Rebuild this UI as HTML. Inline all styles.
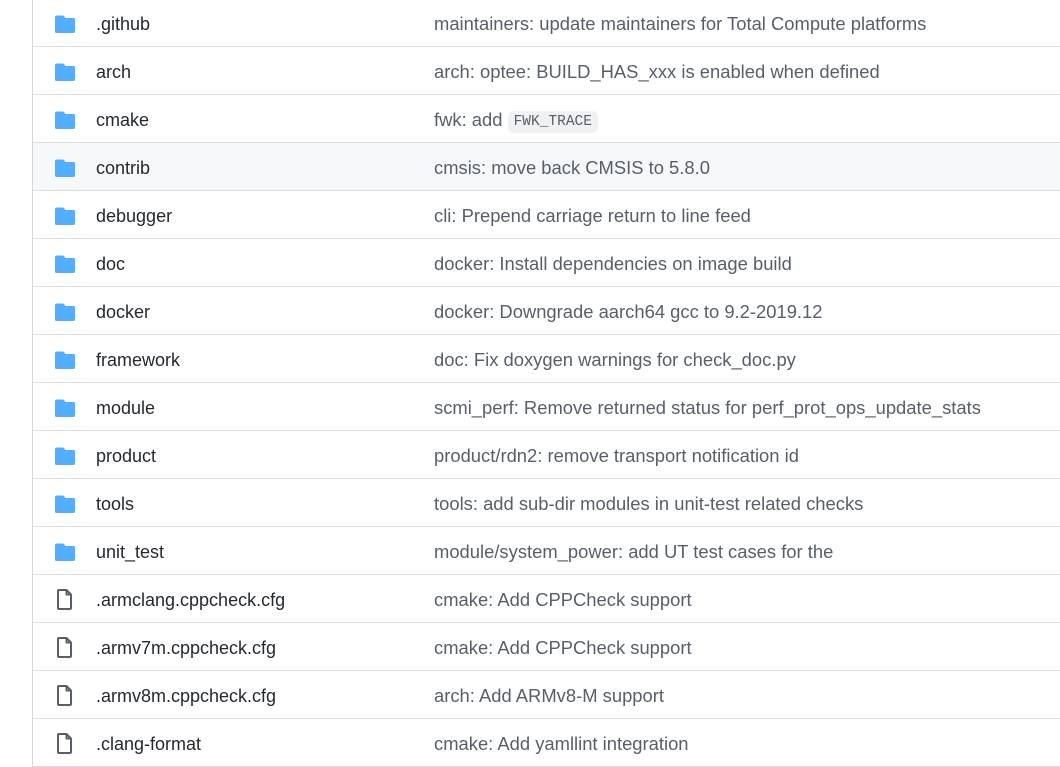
<!DOCTYPE html>
<html><head><style>
body{margin:0;width:1060px;height:762px;overflow:hidden;background:#fff;font-family:"Liberation Sans",sans-serif;}
.wrap{position:absolute;left:32px;top:-1px;width:1040px;border-left:1px solid #d0d7de;}
.row{position:relative;height:47px;border-bottom:1px solid #d8dee4;}
.row.h{background:#f6f8fa;}
.ic{position:absolute;left:21px;top:15px;}
.n{position:absolute;left:63px;top:15px;font-size:18px;color:#24292f;white-space:nowrap;}
.m{position:absolute;left:401px;top:14px;font-size:18.4px;color:#57606a;white-space:nowrap;}
code{font-family:"Liberation Mono",monospace;font-size:14.5px;background:#eff1f3;border-radius:6px;padding:3px 6px;color:#57606a;position:relative;top:-1px;}
</style></head><body>
<div class="wrap" id="w"></div>
<script>
var F='<svg class="ic" width="22" height="20" viewBox="0 0 22 20"><path d="M1 5.5C1 3.6 1.6 3 3 3h5.5c1 0 1.4.5 2 1.3l.8 1.2H19.5c1 0 1.5.5 1.5 1.5V19c0 1-.5 1.5-1.5 1.5h-17C1.5 20.5 1 20 1 19z" fill="#54aeff" transform="translate(0,-1.5)"/></svg>';
var D='<svg class="ic" width="22" height="24" viewBox="0 0 22 24" style="top:12px"><path d="M5 3h7.5l4.5 4.5V21a1 1 0 0 1-1 1H5a1 1 0 0 1-1-1V4a1 1 0 0 1 1-1z M12.5 3v4.5H17" fill="none" stroke="#57606a" stroke-width="2" stroke-linejoin="round"/></svg>';
var r=[["d",".github","maintainers: update maintainers for Total Compute platforms"],["d","arch","arch: optee: BUILD_HAS_xxx is enabled when defined"],["d","cmake","fwk: add <code>FWK_TRACE</code>"],["d","contrib","cmsis: move back CMSIS to 5.8.0",1],["d","debugger","cli: Prepend carriage return to line feed"],["d","doc","docker: Install dependencies on image build"],["d","docker","docker: Downgrade aarch64 gcc to 9.2-2019.12"],["d","framework","doc: Fix doxygen warnings for check_doc.py"],["d","module","scmi_perf: Remove returned status for perf_prot_ops_update_stats"],["d","product","product/rdn2: remove transport notification id"],["d","tools","tools: add sub-dir modules in unit-test related checks"],["d","unit_test","module/system_power: add UT test cases for the"],["f",".armclang.cppcheck.cfg","cmake: Add CPPCheck support"],["f",".armv7m.cppcheck.cfg","cmake: Add CPPCheck support"],["f",".armv8m.cppcheck.cfg","arch: Add ARMv8-M support"],["f",".clang-format","cmake: Add yamllint integration"]];
var h='';r.forEach(function(x){h+='<div class="row'+(x[3]?' h':'')+'">'+(x[0]=='d'?F:D)+'<span class="n">'+x[1]+'</span><span class="m">'+x[2]+'</span></div>';});
document.getElementById('w').innerHTML=h;
</script>
</body></html>
